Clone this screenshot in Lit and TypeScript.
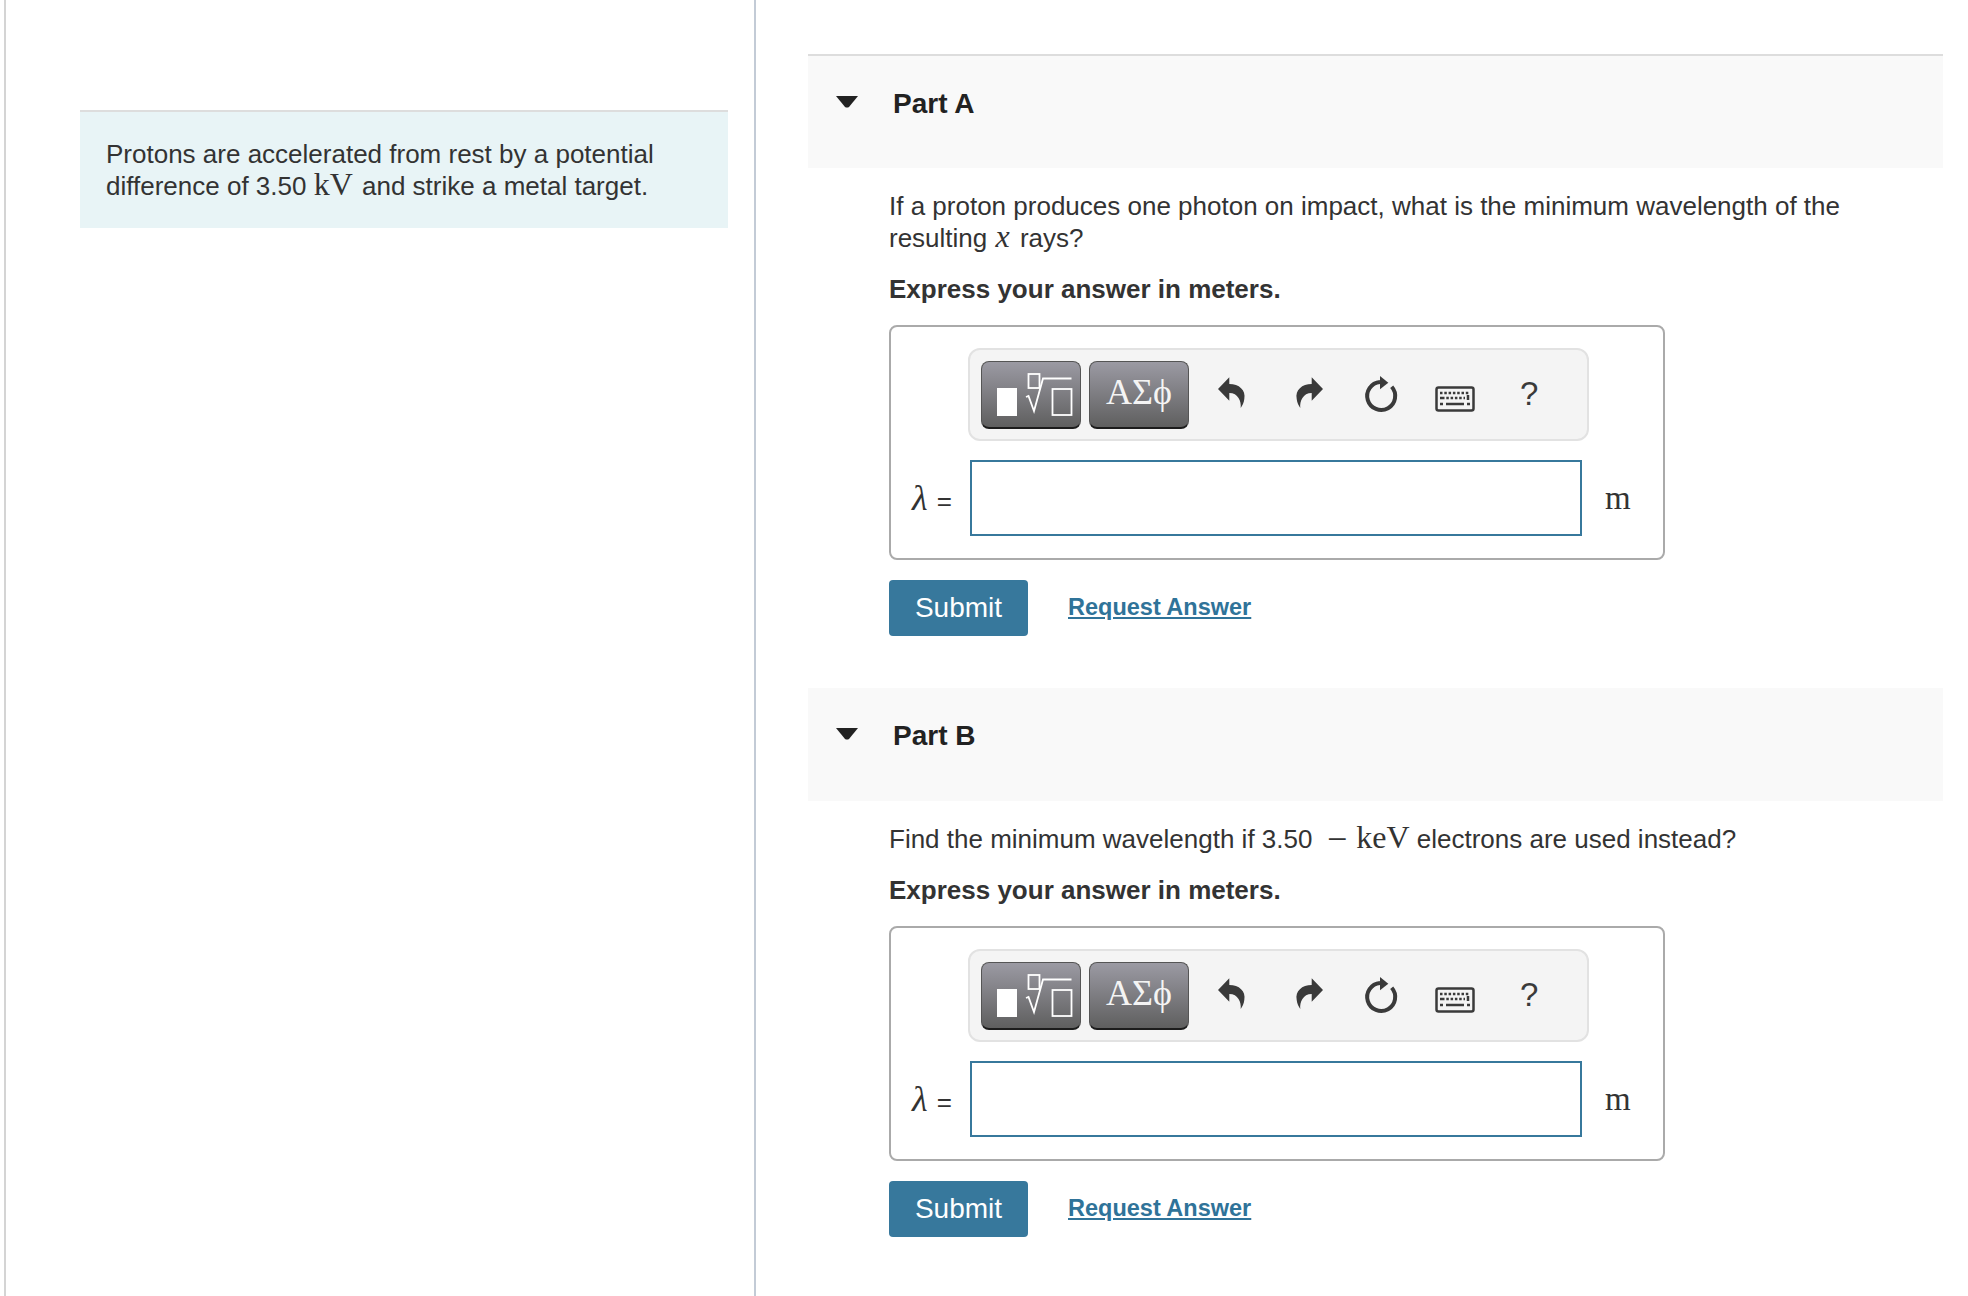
import { css, html, LitElement } from 'lit';
import { customElement } from 'lit/decorators.js';

@customElement('app-root')
class AppRoot extends LitElement {
  static styles = css`
    :host {
      display: block;
      font-family: "Liberation Sans", Arial, sans-serif;
      color: #333;
      background: #fff;
    }
    .page {
      display: flex;
      min-height: 1296px;
    }
    .left {
      box-sizing: border-box;
      width: 752px;
      flex: none;
      margin-left: 4px;
      border-left: 2px solid #d4d4d4;
      border-right: 2px solid #c3cbd6;
      padding: 110px 26px 0 74px;
    }
    .intro {
      box-sizing: border-box;
      height: 118px;
      border-top: 2px solid #ddd;
      background: #e8f4f6;
      padding: 26px 26px 0;
      font-size: 26px;
      line-height: 32px;
    }
    .math {
      font-family: "Liberation Serif", serif;
      font-size: 32px;
      line-height: 0;
      margin-right: 2px;
    }
    .math.var {
      margin: 0 3px 0 1px;
    }
    .math.unit-text {
      margin-right: 0;
    }
    .minus {
      font-size: 36px;
      margin-right: 1px;
      vertical-align: -3px;
    }
    .right {
      flex: 1;
      padding: 54px 25px 0 52px;
    }
    .part-head {
      box-sizing: border-box;
      height: 113px;
      background: #f9f9f9;
      display: flex;
      align-items: flex-start;
      padding: 28px 0 0 28px;
      color: #222;
      font-weight: 700;
      font-size: 28px;
      line-height: 40px;
    }
    .part-head.first {
      height: 114px;
      border-top: 2px solid #ddd;
    }
    .part-head svg {
      display: block;
      margin: 12px 35px 0 0;
    }
    .part-body {
      padding: 22px 0 52px 81px;
    }
    .question {
      margin: 0;
      max-width: 1000px;
      font-size: 26px;
      line-height: 32px;
    }
    .express {
      margin: 19px 0 0;
      font-size: 26px;
      line-height: 32px;
      font-weight: 700;
    }
    .answer {
      box-sizing: border-box;
      width: 776px;
      height: 235px;
      margin-top: 20px;
      border: 2px solid #aaa;
      border-radius: 8px;
      padding: 21px 0 0;
    }
    .toolbar {
      box-sizing: border-box;
      width: 621px;
      height: 93px;
      margin-left: 77px;
      border: 2px solid #e2e2e2;
      border-radius: 12px;
      background: #f4f4f4;
      display: flex;
      align-items: center;
      padding-left: 11px;
    }
    .tool {
      box-sizing: border-box;
      height: 68px;
      border: 1px solid #555;
      border-bottom: 2px solid #1c1c1c;
      border-radius: 8px;
      background: linear-gradient(#9b9aa3, #5f5f5f);
      display: flex;
      align-items: center;
      justify-content: center;
      flex: none;
    }
    .tool.templates {
      width: 100px;
      padding: 2px 0 0 8px;
    }
    .tool.symbols {
      width: 100px;
      margin-left: 8px;
      color: #f4f4f4;
      font-family: "Liberation Serif", serif;
      font-size: 36px;
      padding-bottom: 4px;
    }
    .icon {
      display: block;
      flex: none;
    }
    .undo { margin: 0 0 4px 26px; }
    .redo { margin: 0 0 4px 47px; }
    .reload { margin-left: 37px; }
    .keyboard { margin: 8px 0 0 36px; }
    .help {
      margin-left: 45px;
      font-size: 33px;
      color: #3a3a3a;
      padding-bottom: 2px;
    }
    .input-row {
      display: flex;
      align-items: center;
      margin-top: 19px;
    }
    .label {
      box-sizing: border-box;
      width: 79px;
      padding-left: 21px;
      font-size: 26px;
      white-space: nowrap;
    }
    .label i {
      font-family: "Liberation Serif", serif;
      font-size: 36px;
      margin-right: 2px;
    }
    .input {
      box-sizing: border-box;
      width: 612px;
      height: 76px;
      border: 2px solid #37789c;
      background: #fff;
    }
    .unit {
      margin-left: 23px;
      font-family: "Liberation Serif", serif;
      font-size: 33px;
    }
    .actions {
      display: flex;
      align-items: center;
      margin-top: 20px;
    }
    .submit {
      box-sizing: border-box;
      width: 139px;
      height: 56px;
      border-radius: 4px;
      background: #37789c;
      color: #fff;
      font-size: 28px;
      display: flex;
      align-items: center;
      justify-content: center;
    }
    .request {
      margin-left: 40px;
      color: #2f7399;
      font-size: 23.5px;
      font-weight: 700;
      text-decoration: underline;
      margin-top: -1px;
    }
  `;

  parts = [
    {
      name: 'Part A',
      question: html`If a proton produces one photon on impact, what is the minimum wavelength of the
        resulting <span class="math var"><i>x</i></span> rays?`,
    },
    {
      name: 'Part B',
      question: html`Find the minimum wavelength if 3.50 &nbsp;<span class="math unit-text"><span class="minus">&minus;</span> keV</span> electrons are used instead?`,
    },
  ];

  renderToolbar() {
    return html`
      <div class="toolbar">
        <div class="tool templates">
          <svg class="icon" width="76" height="44" viewBox="0 0 76 44" fill="none" stroke="#fff" stroke-width="1.8">
            <rect x="0" y="15" width="20" height="28" fill="#fff" stroke="none"></rect>
            <rect x="31.5" y="1" width="11" height="14"></rect>
            <path d="M29 24 l2.5-1 L37 38 L46 5.500 H74.500"></path>
            <rect x="55.500" y="16" width="19" height="26"></rect>
          </svg>
        </div>
        <div class="tool symbols">ΑΣϕ</div>
        <svg class="icon undo" width="32" height="36" viewBox="0 0 32 36">
          <path fill="#3a3a3a" d="M3 14 L14.300 2.300 V9 C24 9 31 15 29.300 24 C29 28 27 31 25.700 33 C26.500 26 23 18 14.300 18 V25.700 Z"></path>
        </svg>
        <svg class="icon redo" width="32" height="36" viewBox="0 0 32 36">
          <path fill="#3a3a3a" transform="translate(32 0) scale(-1 1)" d="M3 14 L14.300 2.300 V9 C24 9 31 15 29.300 24 C29 28 27 31 25.700 33 C26.500 26 23 18 14.300 18 V25.700 Z"></path>
        </svg>
        <svg class="icon reload" width="36" height="38" viewBox="0 0 36 38" fill="none">
          <path stroke="#3a3a3a" stroke-width="4" d="M28.700 10.700 A14 14 0 1 1 17 6"></path>
          <path fill="#3a3a3a" d="M17 0 L25.300 6.700 L17 13.300 Z"></path>
        </svg>
        <svg class="icon keyboard" width="40" height="26" viewBox="0 0 40 26">
          <rect x="1.500" y="1.500" width="37" height="23" rx="2" fill="none" stroke="#3a3a3a" stroke-width="2.500"></rect>
          <path stroke="#3a3a3a" stroke-width="2.500" stroke-dasharray="2.500 1.800" d="M5 7 H35 M7 12 H30"></path>
          <path stroke="#3a3a3a" stroke-width="2.500" d="M5 12 H7 M33 9 V14 M5 18 H8 M11 18 H29 M32 18 H35"></path>
        </svg>
        <div class="help">?</div>
      </div>
    `;
  }

  renderPart(part: { name: string; question: unknown }, index: number) {
    return html`
      <div class="part-head ${index === 0 ? 'first' : ''}">
        <svg width="22" height="12" viewBox="0 0 22 12"><path fill="#222" d="M0 0 H22 L13 11 Q11 12 9 11 Z"></path></svg>
        ${part.name}
      </div>
      <div class="part-body">
        <p class="question">${part.question}</p>
        <p class="express">Express your answer in meters.</p>
        <div class="answer">
          ${this.renderToolbar()}
          <div class="input-row">
            <div class="label"><i>λ</i> =</div>
            <div class="input"></div>
            <div class="unit">m</div>
          </div>
        </div>
        <div class="actions">
          <div class="submit">Submit</div>
          <a class="request">Request Answer</a>
        </div>
      </div>
    `;
  }

  render() {
    return html`
      <div class="page">
        <div class="left">
          <div class="intro">
            Protons are accelerated from rest by a potential difference of 3.50
            <span class="math">kV</span> and strike a metal target.
          </div>
        </div>
        <div class="right">
          ${this.parts.map((part, i) => this.renderPart(part, i))}
        </div>
      </div>
    `;
  }
}
